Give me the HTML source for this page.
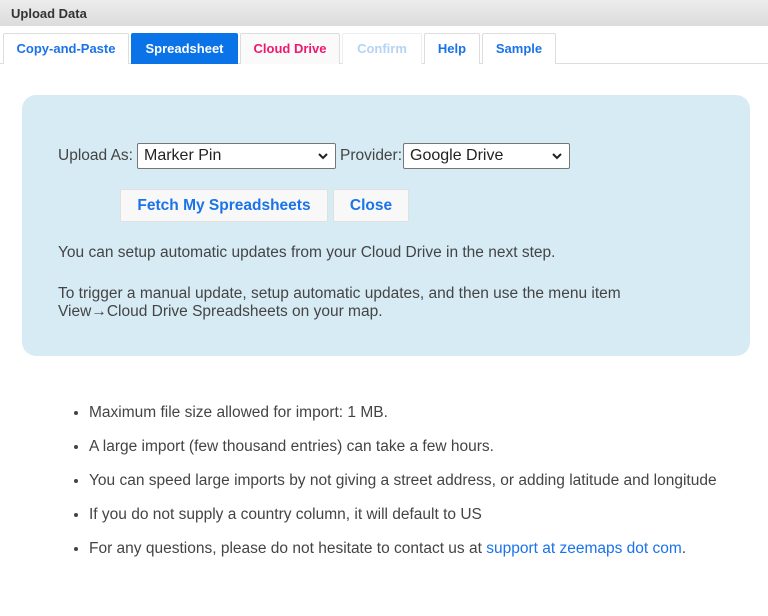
<!DOCTYPE html>
<html><head><meta charset="utf-8"><style>
*{box-sizing:border-box}
body{margin:0;width:768px;height:616px;background:#fff;font-family:"Liberation Sans",Arial,sans-serif;overflow:hidden;position:relative}
.hdr{height:26px;background:linear-gradient(#ececec,#dcdcdc);font-size:13px;font-weight:bold;color:#333;padding:6px 0 0 11px}
.tabs{position:absolute;top:33px;left:0;width:768px;height:31px;border-bottom:1px solid #ddd}
.tab{position:absolute;top:0;height:31px;border:1px solid #ddd;border-bottom:none;background:#fff;font-size:13px;font-weight:bold;color:#1a73e8;text-align:center;line-height:29px;border-radius:2px 2px 0 0}
.panel{position:absolute;left:22px;top:95px;width:728px;height:261px;background:#d7ebf5;border-radius:14px}
.lbl{position:absolute;font-size:15.5px;color:#444}
.sel{position:absolute;height:26px;background:#fff;border:1px solid #767676;border-radius:2px;font-size:16px;color:#222;padding:3px 0 0 6px}
.sel svg{position:absolute;right:7px;top:9px}
.btn{position:absolute;height:33px;background:#f8f8f8;border:1px solid #e0e0e0;border-radius:2px;font-size:15.5px;font-weight:bold;color:#1a73e8;text-align:center;line-height:32px}
.txt{position:absolute;left:58px;font-size:15.5px;color:#444;line-height:18px}
ul{position:absolute;left:48px;top:396px;margin:0;padding:0 0 0 41px;font-size:15.5px;color:#444}
li{height:34px;line-height:34px}
a{color:#1a73e8;text-decoration:none}
</style></head><body>
<div class="hdr">Upload Data</div>
<div class="tabs">
<div class="tab" style="left:3px;width:126px">Copy-and-Paste</div>
<div class="tab" style="left:131px;width:107px;background:#0a73e8;border-color:#0a73e8;color:#fff">Spreadsheet</div>
<div class="tab" style="left:240px;width:100px;color:#f0176e;background:#fafafa">Cloud Drive</div>
<div class="tab" style="left:342px;width:80px;color:#b5d3f5;border-color:#eee">Confirm</div>
<div class="tab" style="left:424px;width:56px">Help</div>
<div class="tab" style="left:482px;width:74px">Sample</div>
</div>
<div class="panel"></div>
<div class="lbl" style="left:58px;top:147px">Upload As:</div>
<div class="sel" style="left:137px;top:143px;width:199px">Marker Pin<svg width="10" height="7"><path d="M1 1l4 4 4-4" stroke="#222" stroke-width="2" fill="none"/></svg></div>
<div class="lbl" style="left:340px;top:147px">Provider:</div>
<div class="sel" style="left:403px;top:143px;width:167px">Google Drive<svg width="10" height="7"><path d="M1 1l4 4 4-4" stroke="#222" stroke-width="2" fill="none"/></svg></div>
<div class="btn" style="left:120px;top:189px;width:208px">Fetch My Spreadsheets</div>
<div class="btn" style="left:333px;top:189px;width:76px">Close</div>
<div class="txt" style="top:244px">You can setup automatic updates from your Cloud Drive in the next step.</div>
<div class="txt" style="top:285px">To trigger a manual update, setup automatic updates, and then use the menu item<br>View→Cloud Drive Spreadsheets on your map.</div>
<ul>
<li>Maximum file size allowed for import: 1 MB.</li>
<li>A large import (few thousand entries) can take a few hours.</li>
<li>You can speed large imports by not giving a street address, or adding latitude and longitude</li>
<li>If you do not supply a country column, it will default to US</li>
<li>For any questions, please do not hesitate to contact us at <a>support at zeemaps dot com</a>.</li>
</ul>
</body></html>
